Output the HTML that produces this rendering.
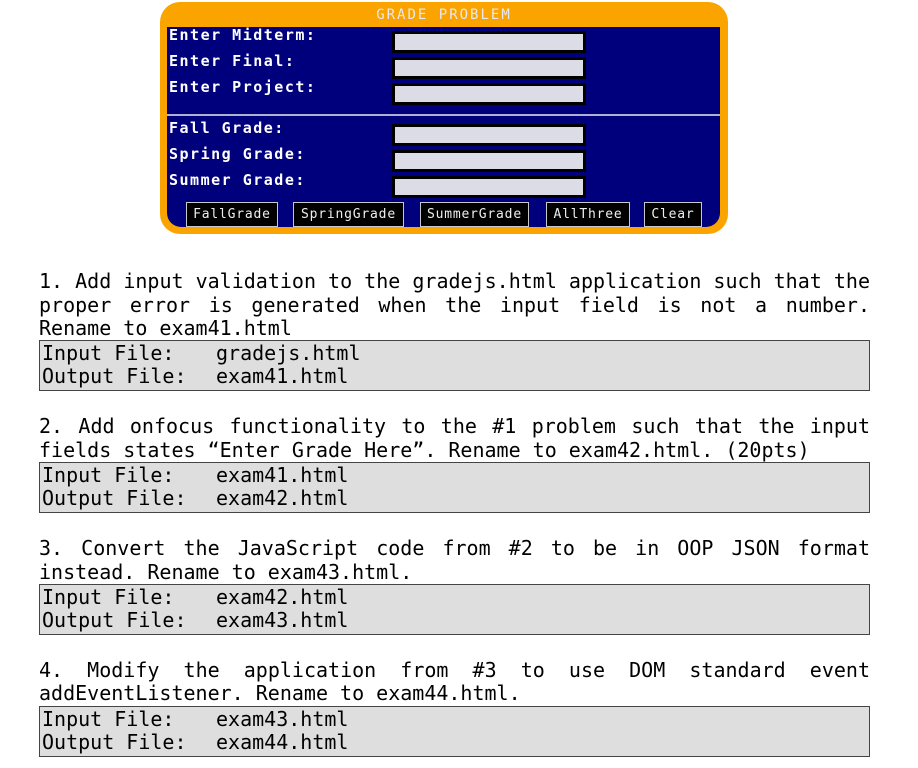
<!DOCTYPE html>
<html><head><meta charset="utf-8"><style>
*{margin:0;padding:0;box-sizing:border-box}
body{width:918px;height:768px;background:#fff;position:relative;overflow:hidden;font-family:"DejaVu Sans Mono","Liberation Mono",monospace}
.a{position:absolute}
#panel{left:160px;top:2px;width:568px;height:232px;background:#fba400;border-radius:20px}
#blue{left:167px;top:27px;width:553px;height:200px;background:#00007d;border-radius:0 0 14px 14px}
.t{left:160px;top:7px;width:568px;text-align:center;color:#e8e8f0;font-family:"DejaVu Sans Mono",monospace;font-size:14px;letter-spacing:2px}
.lb{left:169px;color:#fff;font-family:"DejaVu Sans Mono",monospace;font-weight:bold;font-size:15px;letter-spacing:1.5px}
.in{left:392px;width:194px;height:22px;background:#000;padding:3px}
.in div{width:100%;height:100%;background:#dcdce6}
.hr{left:167px;top:114px;width:553px;height:2px;background:#b0b0d0}
.bt{top:202px;height:25px;background:#000;border:1px solid #c8c8c8;color:#eee;font-family:"DejaVu Sans Mono",monospace;font-size:13px;letter-spacing:.8px;text-align:center;line-height:23px}
.p{left:39px;width:831px;font-size:20px;line-height:24px;color:#000;white-space:nowrap}
.j{text-align:justify;text-align-last:justify;white-space:normal}
.box{left:39px;width:831px;height:51px;background:#dedede;border:1px solid #444}
.bx{font-size:20px;line-height:23px;white-space:pre;left:2px}
.bv{left:176px}
</style></head><body>
<div class="a" id="panel"></div>
<div class="a" id="blue"></div>
<div class="a t">GRADE PROBLEM</div>
<div class="a lb" style="top:26px">Enter Midterm:</div>
<div class="a lb" style="top:52px">Enter Final:</div>
<div class="a lb" style="top:78px">Enter Project:</div>
<div class="a lb" style="top:119px">Fall Grade:</div>
<div class="a lb" style="top:145px">Spring Grade:</div>
<div class="a lb" style="top:171px">Summer Grade:</div>
<div class="a in" style="top:31px"><div></div></div>
<div class="a in" style="top:57px"><div></div></div>
<div class="a in" style="top:83px"><div></div></div>
<div class="a in" style="top:124px"><div></div></div>
<div class="a in" style="top:150px"><div></div></div>
<div class="a in" style="top:176px"><div></div></div>
<div class="a hr"></div>
<div class="a bt" style="left:186px;width:92px">FallGrade</div>
<div class="a bt" style="left:293px;width:111px">SpringGrade</div>
<div class="a bt" style="left:420px;width:109px">SummerGrade</div>
<div class="a bt" style="left:546px;width:84px">AllThree</div>
<div class="a bt" style="left:644px;width:58px">Clear</div>

<div class="a p j" style="top:269px">1. Add input validation to the gradejs.html application such that the</div>
<div class="a p j" style="top:293px">proper error is generated when the input field is not a number.</div>
<div class="a p" style="top:316px">Rename to exam41.html</div>
<div class="a box" style="top:340px"><div class="a bx" style="top:1px">Input File:</div><div class="a bx bv" style="top:1px">gradejs.html</div><div class="a bx" style="top:24px">Output File:</div><div class="a bx bv" style="top:24px">exam41.html</div></div>

<div class="a p j" style="top:414px">2. Add onfocus functionality to the #1 problem such that the input</div>
<div class="a p" style="top:438px">fields states “Enter Grade Here”. Rename to exam42.html. (20pts)</div>
<div class="a box" style="top:462px"><div class="a bx" style="top:1px">Input File:</div><div class="a bx bv" style="top:1px">exam41.html</div><div class="a bx" style="top:24px">Output File:</div><div class="a bx bv" style="top:24px">exam42.html</div></div>

<div class="a p j" style="top:536px">3. Convert the JavaScript code from #2 to be in OOP JSON format</div>
<div class="a p" style="top:560px">instead. Rename to exam43.html.</div>
<div class="a box" style="top:584px"><div class="a bx" style="top:1px">Input File:</div><div class="a bx bv" style="top:1px">exam42.html</div><div class="a bx" style="top:24px">Output File:</div><div class="a bx bv" style="top:24px">exam43.html</div></div>

<div class="a p j" style="top:658px">4. Modify the application from #3 to use DOM standard event</div>
<div class="a p" style="top:681px">addEventListener. Rename to exam44.html.</div>
<div class="a box" style="top:706px"><div class="a bx" style="top:1px">Input File:</div><div class="a bx bv" style="top:1px">exam43.html</div><div class="a bx" style="top:24px">Output File:</div><div class="a bx bv" style="top:24px">exam44.html</div></div>
</body></html>
